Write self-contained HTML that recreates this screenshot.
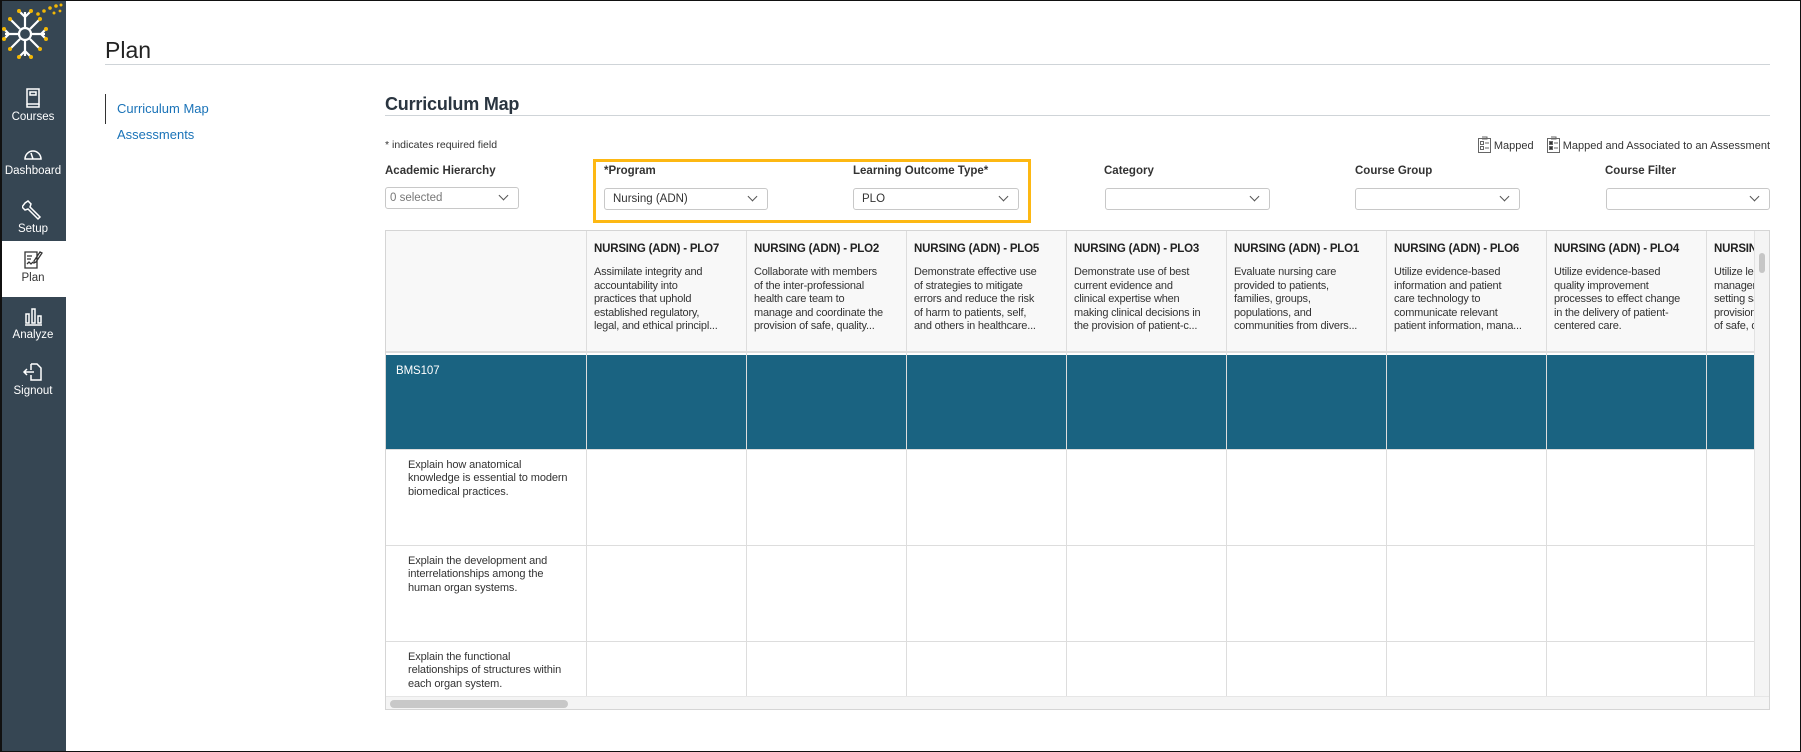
<!DOCTYPE html>
<html><head><meta charset="utf-8"><style>
*{box-sizing:border-box;margin:0;padding:0}
html,body{width:1801px;height:752px;overflow:hidden;background:#fff;font-family:"Liberation Sans",Arial,sans-serif;color:#222}
.frame{position:absolute;left:0;top:0;width:1801px;height:752px;border:1px solid #111;border-left:2px solid #111}
.side{position:absolute;left:0;top:0;width:66px;height:752px;background:#364653}
.nav{position:absolute;left:0;width:66px;height:56px;text-align:center;color:#fff;font-size:11.5px}
.nav svg{display:block;margin:7px auto 2px}
.nav.act{background:#fff;color:#333}
.abs{position:absolute}
.lbl{position:absolute;font-size:11.5px;font-weight:bold;color:#333}
.dd{position:absolute;height:22px;border:1px solid #c8c8c8;border-radius:3px;background:#fff;font-size:11.5px;color:#333;padding:4px 8px}
.dd:after{content:"";position:absolute;right:11px;top:4px;width:6px;height:6px;border-right:1px solid #555;border-bottom:1px solid #555;transform:rotate(45deg)}
.tbl{position:absolute;left:385px;top:230px;width:1385px;height:480px;border:1px solid #d5d5d5;overflow:hidden}
.col{position:absolute;top:0;height:465px;border-left:1px solid #ddd}
.hdr{position:absolute;top:0;height:122px;background:#f8f8f8;border-bottom:2px solid #ddd}
.ht{position:absolute;font-size:11.5px;font-weight:bold;color:#222;white-space:nowrap;letter-spacing:-0.2px}
.hd{position:absolute;font-size:11px;letter-spacing:-0.2px;line-height:13.6px;color:#333;white-space:nowrap}
.teal{position:absolute;left:0;top:124px;width:1368px;height:95px;background:#1a6381}
.row{position:absolute;left:0;width:1368px;border-top:1px solid #ddd}
.rt{position:absolute;left:22px;font-size:11px;letter-spacing:-0.1px;line-height:13.4px;color:#333;white-space:nowrap}
</style></head><body>
<div class="side">
<svg class="abs" style="left:0;top:0" width="66" height="62" viewBox="0 0 66 62">
<g stroke="#fff" stroke-width="2.2" fill="none">
<circle cx="25" cy="34" r="6"/>
<path d="M25 28V12M25 40V56M19 34H5M31 34H45M20 29L11 20M30 29L39 20M20 39L11 48M30 39L39 48M25 17l-5-5M25 17l5-5M25 51l-5 5M25 51l5 5M9 34l-4-4M9 34l-4 4M41 34l4-4M41 34l4 4"/>
</g>
<g fill="#f2b705"><circle cx="19" cy="11" r="2"/><circle cx="31" cy="11" r="2"/><circle cx="38" cy="14" r="1.8"/><circle cx="44" cy="11" r="1.8"/><circle cx="50" cy="8" r="1.8"/><circle cx="56" cy="6" r="1.8"/><circle cx="54" cy="13" r="1.5"/><circle cx="61" cy="5" r="1.5"/><circle cx="60" cy="11" r="1.4"/><circle cx="4" cy="29" r="2"/><circle cx="4" cy="39" r="2"/><circle cx="46" cy="29" r="2"/><circle cx="46" cy="39" r="2"/><circle cx="19" cy="57" r="2"/><circle cx="31" cy="57" r="2"/><circle cx="10" cy="19" r="2"/><circle cx="40" cy="49" r="2"/><circle cx="10" cy="49" r="2"/><circle cx="40" cy="19" r="2"/></g>
</svg>
<div class="nav" style="top:80px"><svg width="20" height="22" viewBox="0 0 20 22" fill="none" stroke="#fff" stroke-width="1.5"><rect x="4" y="2" width="12" height="15"/><path d="M7 5h6v3H7zM4 17v3h12v-3"/></svg>Courses</div>
<div class="nav" style="top:136px"><svg width="22" height="20" viewBox="0 0 22 20" fill="none" stroke="#fff" stroke-width="1.5"><path d="M3 16a8 8 0 1 1 16 0zM11 16l-2-6"/></svg>Dashboard</div>
<div class="nav" style="top:192px"><svg width="22" height="22" viewBox="0 0 22 22" fill="none" stroke="#fff" stroke-width="1.5"><path d="M3 4l3-2 3 3-1 3 10 10-2 2-10-10-3 1-3-3z"/></svg>Setup</div>
<div class="nav act" style="top:241px;height:56px"><svg width="22" height="22" viewBox="0 0 22 22" fill="none" stroke="#333" stroke-width="1.3"><path d="M3 4h12v16H3zM5 8h5M5 11h4M5 16l2-2 2 2 2-2M12 13l6-9 2 1-6 9-2 1z"/></svg>Plan</div>
<div class="nav" style="top:298px"><svg width="22" height="22" viewBox="0 0 22 22" fill="none" stroke="#fff" stroke-width="1.5"><path d="M4 9h3v9H4zM10 4h3v14h-3zM16 11h3v7h-3zM3 20h17"/></svg>Analyze</div>
<div class="nav" style="top:354px"><svg width="22" height="22" viewBox="0 0 22 22" fill="none" stroke="#fff" stroke-width="1.5"><path d="M9 3h6l4 4v12H9v-5M9 9V3M2 11h10M5 8l-3 3 3 3"/></svg>Signout</div>
</div>

<div class="abs" style="left:105px;top:37px;font-size:23px;color:#222">Plan</div>
<div class="abs" style="left:105px;top:64px;width:1665px;height:1px;background:#cfd4d8"></div>
<div class="abs" style="left:105px;top:94px;width:1px;height:30px;background:#333"></div>
<div class="abs" style="left:117px;top:101px;font-size:13px;color:#1a73b8">Curriculum Map</div>
<div class="abs" style="left:117px;top:127px;font-size:13px;color:#1a73b8">Assessments</div>

<div class="abs" style="left:385px;top:94px;font-size:18px;font-weight:bold;color:#2a3540;letter-spacing:-0.2px">Curriculum Map</div>
<div class="abs" style="left:385px;top:115px;width:1385px;height:1px;background:#cfd4d8"></div>
<div class="abs" style="left:385px;top:139px;font-size:10.5px;color:#333">* indicates required field</div>
<div class="abs" style="right:31px;top:136px;font-size:11px;color:#333;white-space:nowrap">
<svg width="13" height="17" viewBox="0 0 13 17" style="vertical-align:-4px" fill="none" stroke="#666"><rect x="0.5" y="2.5" width="12" height="14"/><rect x="2.5" y="5.5" width="3" height="3"/><rect x="2.5" y="10.5" width="3" height="3"/><path d="M7 7h4M7 12h4M4 1h5v2H4"/></svg> Mapped
<span style="display:inline-block;width:10px"></span><svg width="13" height="17" viewBox="0 0 13 17" style="vertical-align:-4px" fill="none" stroke="#666"><rect x="0.5" y="2.5" width="12" height="14"/><rect x="2.5" y="5.5" width="3" height="3" fill="#333"/><rect x="2.5" y="10.5" width="3" height="3" fill="#333"/><path d="M7 7h4M7 12h4M4 1h5v2H4"/></svg> Mapped and Associated to an Assessment</div>

<div class="abs" style="left:593px;top:159px;width:438px;height:64px;border:3px solid #fdb813"></div>
<div class="lbl" style="left:385px;top:165px">Academic Hierarchy</div>
<div class="lbl" style="left:604px;top:165px">*Program</div>
<div class="lbl" style="left:853px;top:165px">Learning Outcome Type*</div>
<div class="lbl" style="left:1104px;top:165px">Category</div>
<div class="lbl" style="left:1355px;top:165px">Course Group</div>
<div class="lbl" style="left:1605px;top:165px">Course Filter</div>
<div class="dd" style="left:385px;top:187px;width:134px;color:#777;padding-left:4px">0 selected</div>
<div class="dd" style="left:604px;top:188px;width:164px">Nursing (ADN)</div>
<div class="dd" style="left:853px;top:188px;width:166px">PLO</div>
<div class="dd" style="left:1105px;top:188px;width:165px"></div>
<div class="dd" style="left:1355px;top:188px;width:165px"></div>
<div class="dd" style="left:1606px;top:188px;width:164px"></div>

<div class="tbl">
<div class="hdr" style="left:0;width:1368px"></div>
<div class="teal"></div>
<div class="row" style="top:218px;height:96px"></div>
<div class="row" style="top:314px;height:96px"></div>
<div class="row" style="top:410px;height:56px"></div>
<div class="rt" style="left:10px;top:134px;color:#fff;font-size:11.5px">BMS107</div>
<div class="rt" style="top:228px">Explain how anatomical<br>knowledge is essential to modern<br>biomedical practices.</div>
<div class="rt" style="top:324px">Explain the development and<br>interrelationships among the<br>human organ systems.</div>
<div class="rt" style="top:420px">Explain the functional<br>relationships of structures within<br>each organ system.</div>

<div class="col" style="left:200px"></div><div class="col" style="left:360px"></div><div class="col" style="left:520px"></div><div class="col" style="left:680px"></div><div class="col" style="left:840px"></div><div class="col" style="left:1000px"></div><div class="col" style="left:1160px"></div><div class="col" style="left:1320px"></div>

<div class="ht" style="left:208px;top:12px">NURSING (ADN) - PLO7</div>
<div class="hd" style="left:208px;top:35px">Assimilate integrity and<br>accountability into<br>practices that uphold<br>established regulatory,<br>legal, and ethical principl...</div>
<div class="ht" style="left:368px;top:12px">NURSING (ADN) - PLO2</div>
<div class="hd" style="left:368px;top:35px">Collaborate with members<br>of the inter-professional<br>health care team to<br>manage and coordinate the<br>provision of safe, quality...</div>
<div class="ht" style="left:528px;top:12px">NURSING (ADN) - PLO5</div>
<div class="hd" style="left:528px;top:35px">Demonstrate effective use<br>of strategies to mitigate<br>errors and reduce the risk<br>of harm to patients, self,<br>and others in healthcare...</div>
<div class="ht" style="left:688px;top:12px">NURSING (ADN) - PLO3</div>
<div class="hd" style="left:688px;top:35px">Demonstrate use of best<br>current evidence and<br>clinical expertise when<br>making clinical decisions in<br>the provision of patient-c...</div>
<div class="ht" style="left:848px;top:12px">NURSING (ADN) - PLO1</div>
<div class="hd" style="left:848px;top:35px">Evaluate nursing care<br>provided to patients,<br>families, groups,<br>populations, and<br>communities from divers...</div>
<div class="ht" style="left:1008px;top:12px">NURSING (ADN) - PLO6</div>
<div class="hd" style="left:1008px;top:35px">Utilize evidence-based<br>information and patient<br>care technology to<br>communicate relevant<br>patient information, mana...</div>
<div class="ht" style="left:1168px;top:12px">NURSING (ADN) - PLO4</div>
<div class="hd" style="left:1168px;top:35px">Utilize evidence-based<br>quality improvement<br>processes to effect change<br>in the delivery of patient-<br>centered care.</div>
<div style="position:absolute;left:1321px;top:0;width:47px;height:122px;overflow:hidden">
<div class="ht" style="left:7px;top:12px">NURSING (ADN) - PLO8</div>
<div class="hd" style="left:7px;top:35px">Utilize leadership and<br>management skills in<br>setting safe priorities in the<br>provision<br>of safe, quality care.</div>
</div>
<div class="abs" style="left:1368px;top:0;width:16px;height:465px;background:#f4f4f4;border-left:1px solid #e2e2e2"></div>
<div class="abs" style="left:1373px;top:22px;width:6px;height:20px;border-radius:3px;background:#c6c6c6"></div>
<div class="abs" style="left:0;top:465px;width:1384px;height:15px;background:#f4f4f4;border-top:1px solid #e6e6e6"></div>
<div class="abs" style="left:4px;top:469px;width:178px;height:8px;border-radius:4px;background:#c8c8c8"></div>
</div>

<div class="frame"></div>
</body></html>
